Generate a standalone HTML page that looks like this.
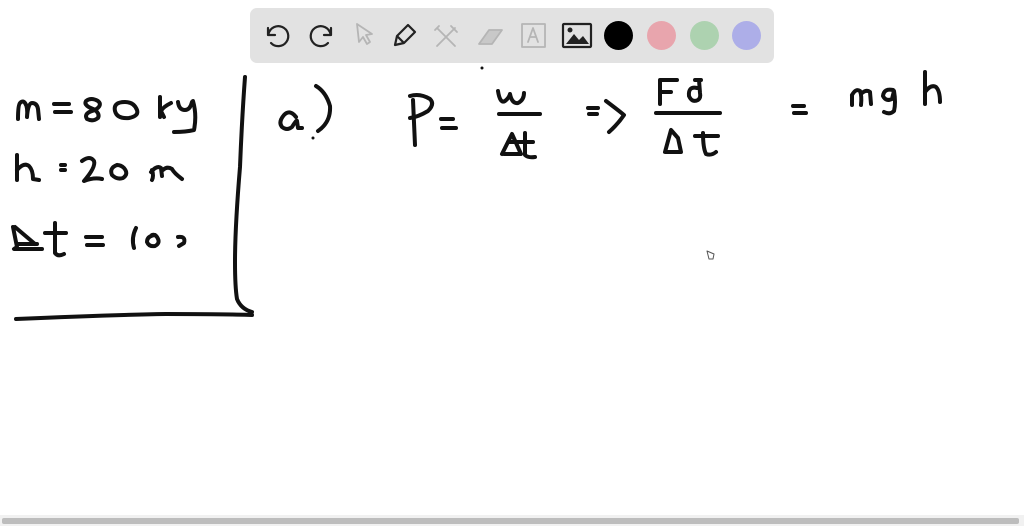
<!DOCTYPE html>
<html><head><meta charset="utf-8"><style>
html,body{margin:0;padding:0;background:#fff;width:1024px;height:526px;overflow:hidden;font-family:"Liberation Sans",sans-serif}
.tb{position:absolute;left:250px;top:8px;width:524px;height:55px;background:#e2e2e2;border-radius:7px}
.dot{position:absolute;top:21px;width:29px;height:29px;border-radius:50%}
.sb{position:absolute;left:2px;top:518px;width:1017px;height:6px;background:#bdbdbd;border-radius:2px}
.sbt{position:absolute;left:0;top:515px;width:1024px;height:11px;background:#f1f1f1}
</style></head><body>
<div class="tb"></div>
<svg width="1024" height="526" style="position:absolute;left:0;top:0" fill="none" stroke-linecap="round" stroke-linejoin="round">
<g stroke="#222" stroke-width="2.2">
<path d="M268 28 v7 h7"/><path d="M268.5 34 A10 10 0 1 1 271 43"/>
<path d="M331 28 v7 h-7"/><path d="M330.5 34 A10 10 0 1 0 328 43"/>
<path d="M395 45 l2-9 l11-11 l7 7 l-11 11 z M397 36 l7 7"/>
<rect x="563" y="24" width="28" height="23" rx="1"/>
</g>
<path d="M566 44 l8-10 l5 6 l4-4 l6 8 z" fill="#222"/><circle cx="570" cy="30" r="2.5" fill="#222"/>
<g stroke="#b5b5b5" stroke-width="1.8">
<path d="M357 24 l2 18 l4-5 l4 7 l3-2 l-4-7 l6-1 z"/>
<path d="M437 28 l18 18 M455 28 l-18 18 M435 30 l4-4 M451 26 l6 6"/>
<path d="M479 44 l10-14 h13 l-10 14 z" fill="#c8c8c8"/>
<rect x="522" y="24" width="23" height="23"/><path d="M528 42 l5-14 l5 14 M530 37 h6"/>
</g>
<g stroke="#111" stroke-width="4">
<path d="M18 119 q0-14 2-16 q3-3 5 0 q3 4 2 14 q1-14 5-14 q5 0 6 6 l1 10"/>
<path d="M54 104 h15 M55 112 h16"/>
<path d="M96 110 q-13-4-10-9 q5-4 12 0 q5 4-3 9 q-12 3-8 9 q6 3 11-1 q2-4-3-8"/>
<path d="M125 102 q-12 0-10 9 q2 8 14 7 q10-2 8-8 q-3-8-12-8"/>
<path d="M160 97 v20 M171 103 q-8 4-10 8 l3 6"/>
<path d="M178 102 q1 8 7 8 q5 0 7-8 M193 101 q4 14 1 29 q-8 2-20 2"/>
<path d="M17 155 v25 M17 170 q7-8 12-4 q4 4 4 13 l6 1"/>
<path d="M61 165 h4 M61 170 h4"/>
<path d="M82 161 q8-6 12 0 q2 6-10 20 q10-4 18-2"/>
<path d="M117 165 q-8 3-5 10 q5 5 11 3 q6-4 1-10 q-3-3-7-3"/>
<path d="M152 170 q2 6 0 10 M151 172 q6-7 10-4 l1 8 M163 170 q4-4 9-1 q2 4 10 10"/>
<path d="M13 227 l4 20 l-3 2 h28 M15 227 l20 17 M37 244 h-20"/>
<path d="M55 223 v30 q3 4 9 1 M45 233 h21"/>
<path d="M86 237 h16 M87 245 h16"/>
<path d="M136 228 q-5 10-2 20"/>
<path d="M155 235 q-8 1-8 7 q2 5 8 4 q6-3 2-9 q-2-3-5-2"/>
<path d="M178 237 q8-1 6 6 l-5 3"/>
<path d="M245 77 q-3 40-5 90 q-5 60-5 95 q0 25 2 37 q4 10 15 13 M16 319 q90-4 150-5 q60 0 86 1"/>
<path d="M296 117 q-6-8-12-2 q-6 7-2 12 q5 4 10 0 q5-8 5-6 l1 7 l4 0"/>
<path d="M316 86 q10 6 14 20 q1 16-12 25"/>
<path d="M413 100 l2 45 M410 96 q10-3 20 3 q5 5-2 12 q-10 6-18 7"/>
<path d="M441 119 h12 M442 128 h14"/>
<path d="M498 91 q2 13 7 10 q4-3 5-7 q2 10 8 9 q6-3 6-10 M499 114 h41"/>
<path d="M502 154 l10-20 l9 20 h-17 M525 133 v22 q3 3 10 2 M508 142 h25"/>
<path d="M588 108 h10 M589 114 h8 M606 101 q12 9 18 14 q-6 9-15 17"/>
<path d="M660 80 h17 M660 80 v24 M660 92 h11 M697 88 q-9-2-8 8 q3 7 9 4 q3-2 2-7 l-1-13 M695 80 h6"/>
<path d="M656 113 h64 M671 130 l-6 22 h16 l-3-14 z M703 133 q0 15 3 21 q5 2 10-2 M695 136 h23"/>
<path d="M793 106 h11 M794 113 h12"/>
<path d="M852 95 v10 M852 95 q4-7 8-4 q2 5 1 14 M861 94 q5-5 9-2 l1 12"/>
<path d="M893 90 q-9-2-10 6 q3 6 9 3 l2-8 q2 12 0 20 q-4 4-10 1"/>
<path d="M925 72 v32 M925 92 q6-8 11-5 q4 4 4 15"/>
</g>
<circle cx="482" cy="68" r="1.5" fill="#111"/><circle cx="313" cy="138" r="1.5" fill="#111"/>
<path d="M707 251 l2 8 h4 l1-5 z" stroke="#555" stroke-width="1" fill="#fff"/>
</svg>
<div class="dot" style="left:604px;background:#000"></div>
<div class="dot" style="left:647px;background:#e8a5ad"></div>
<div class="dot" style="left:690px;background:#add2b0"></div>
<div class="dot" style="left:732px;background:#adaee8"></div>
<div class="sbt"></div><div class="sb"></div>
</body></html>
